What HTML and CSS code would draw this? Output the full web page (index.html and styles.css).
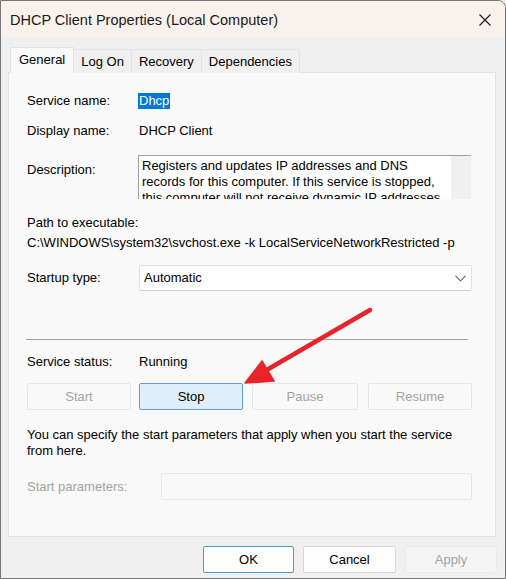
FILE: index.html
```html
<!DOCTYPE html>
<html lang="en">
<head>
<meta charset="utf-8">
<title>DHCP Client Properties (Local Computer)</title>
<link rel="stylesheet" href="styles.css">
</head>
<body>
<div class="window">
  <div class="titlebar">
    <span class="title">DHCP Client Properties (Local Computer)</span>
    <svg class="close" width="12" height="12" viewBox="0 0 12 12" aria-label="Close">
      <path d="M0.5 0.5 L11.5 11.5 M11.5 0.5 L0.5 11.5" stroke="#1b1b1b" stroke-width="1.1" fill="none"/>
    </svg>
  </div>

  <div class="tabs">
    <div class="tab active">General</div>
    <div class="tab">Log On</div>
    <div class="tab">Recovery</div>
    <div class="tab">Dependencies</div>
  </div>

  <div class="panel">
    <div class="row">
      <span class="label">Service name:</span>
      <span class="value"><span class="selected">Dhcp</span></span>
    </div>
    <div class="row gap14">
      <span class="label">Display name:</span>
      <span class="value">DHCP Client</span>
    </div>
    <div class="row desc-row">
      <span class="label desc-label">Description:</span>
      <div class="desc-box">
        <div class="desc-text">Registers and updates IP addresses and DNS records for this computer. If this service is stopped, this computer will not receive dynamic IP addresses and DNS updates.</div>
        <div class="desc-scroll"></div>
      </div>
    </div>
    <div class="path">
      <div>Path to executable:</div>
      <div>C:\WINDOWS\system32\svchost.exe -k LocalServiceNetworkRestricted -p</div>
    </div>
    <div class="row startup-row">
      <span class="label">Startup type:</span>
      <div class="combo">
        <span>Automatic</span>
        <svg width="11" height="7" viewBox="0 0 11 7">
          <path d="M0.5 0.8 L5.5 5.8 L10.5 0.8" stroke="#5f5f5f" stroke-width="1.1" fill="none"/>
        </svg>
      </div>
    </div>

    <hr class="separator">

    <div class="row gap14">
      <span class="label">Service status:</span>
      <span class="value">Running</span>
    </div>
    <div class="actions">
      <button class="btn" disabled>Start</button>
      <button class="btn focus">Stop</button>
      <button class="btn wide" disabled>Pause</button>
      <button class="btn" disabled>Resume</button>
    </div>
    <p class="hint">You can specify the start parameters that apply when you start the service from here.</p>
    <div class="params">
      <span class="label disabled-text">Start parameters:</span>
      <div class="param-input"></div>
    </div>
  </div>

  <div class="footer">
    <button class="btn dlg default">OK</button>
    <button class="btn dlg cancel">Cancel</button>
    <button class="btn dlg apply" disabled>Apply</button>
  </div>

  <svg class="arrow" width="506" height="579" viewBox="0 0 506 579">
    <line x1="370" y1="310" x2="258" y2="375" stroke="#e8232a" stroke-width="4.5" stroke-linecap="round"/>
    <polygon points="245,383 262,361 274,381" fill="#e8232a" stroke="#e8232a" stroke-width="1.5" stroke-linejoin="round"/>
  </svg>
</div>
</body>
</html>
```

FILE: styles.css
```css
* { box-sizing: border-box; }

html, body {
  margin: 0;
  padding: 0;
  background: #f0f0f0;
}

body {
  font-family: "Liberation Sans", Arial, sans-serif;
  font-size: 13px;
  color: #000;
}

.window {
  position: relative;
  width: 506px;
  height: 579px;
  border: 1px solid #757575;
  border-top-right-radius: 8px;
  background: #f0f0f0;
  display: flex;
  flex-direction: column;
  overflow: hidden;
}

/* title bar */
.titlebar {
  height: 36px;
  flex: none;
  background: #f9f1ec;
  display: flex;
  align-items: center;
  justify-content: space-between;
  padding: 0 14px 0 9px;
}

.title {
  font-size: 14.5px;
  color: #1a1a1a;
  padding-top: 1px;
}

.close { display: block; margin-top: 1px; }

/* tab strip */
.tabs {
  flex: none;
  display: flex;
  align-items: flex-end;
  height: 26px;
  margin-top: 10px;
  padding-left: 9px;
  position: relative;
  z-index: 1;
}

.tab {
  height: 24px;
  line-height: 23px;
  padding: 0 7px;
  border: 1px solid #e3e3e3;
  border-bottom: none;
  background: #f0f0f0;
  color: #000;
}

.tab + .tab { border-left: none; }

.tab.active {
  height: 26px;
  line-height: 24px;
  padding: 0 8px;
  background: #f9f9f9;
  border-color: #e3e3e3;
}

/* page */
.panel {
  flex: none;
  height: 465px;
  margin: -1px 9px 0 7px;
  background: #f9f9f9;
  border: 1px solid #e3e3e3;
  padding: 20px 22px 0 18px;
}

.row {
  display: flex;
  align-items: center;
  height: 16px;
  line-height: 16px;
}

.gap14 { margin-top: 14px; }

.label {
  width: 111px;
  flex: none;
}

.value { padding-left: 1px; }

.selected {
  display: inline-block;
  background: #0078d7;
  color: #fff;
  margin-left: -1px;
  padding: 0 1px;
}

.desc-row {
  height: 44px;
  margin-top: 16px;
  align-items: flex-start;
}

.desc-label { margin-top: 7px; }

.desc-box {
  width: 333px;
  height: 44px;
  border-top: 1px solid #a0a0a0;
  border-left: 1px solid #a0a0a0;
  background: #fff;
  display: flex;
  overflow: hidden;
}

.desc-text {
  flex: 1;
  padding: 2px 0 0 3px;
  line-height: 16px;
  font-size: 13px;
}

.desc-scroll {
  width: 20px;
  flex: none;
  background: #f0f0f0;
}

.path {
  margin-top: 14px;
  line-height: 20px;
}

.startup-row {
  height: 26px;
  margin-top: 12px;
}

.combo {
  margin-left: 1px;
  width: 333px;
  height: 26px;
  background: #fff;
  border: 1px solid #e2e2e2;
  border-bottom-color: #cfcfcf;
  border-radius: 2px;
  display: flex;
  align-items: center;
  justify-content: space-between;
  padding: 0 5px 0 4px;
}

.combo svg { display: block; margin-top: 1px; }

.separator {
  border: none;
  border-top: 1px solid #a0a0a0;
  height: 0;
  margin: 48px 5px 0 -1px;
}

.actions {
  margin-top: 13px;
  display: flex;
  height: 27px;
}

.actions .btn { width: 104px; flex: none; }
.actions .btn:nth-child(2) { margin-left: 8px; }
.actions .btn:nth-child(3) { margin-left: 9px; width: 106px; }
.actions .btn:nth-child(4) { margin-left: 10px; }

.btn {
  font-family: "Liberation Sans", Arial, sans-serif;
  font-size: 13px;
  height: 27px;
  background: #fdfdfd;
  border: 1px solid #d6d6d6;
  border-radius: 2px;
  color: #000;
  padding: 0;
}

.btn:disabled {
  background: #f9f9f9;
  border-color: #e6e6e6;
  color: #a3a3a3;
}

.btn.focus {
  background: #e0eef9;
  border-color: #5c9fd8;
}

.hint {
  margin: 17px 0 0 0;
  line-height: 16px;
}

.params {
  margin-top: 14px;
  display: flex;
  align-items: center;
  height: 27px;
}

.params .label { width: 134px; }

.disabled-text { color: #a3a3a3; }

.param-input {
  width: 311px;
  height: 27px;
  border: 1px solid #e6e6e6;
  border-radius: 2px;
  background: #f9f9f9;
}

/* dialog buttons */
.footer {
  flex: none;
  display: flex;
  justify-content: flex-end;
  gap: 9px;
  padding: 9px 8px 0 0;
}

.btn.dlg { width: 91px; flex: none; }
.btn.dlg.cancel { width: 93px; }
.btn.dlg.apply { width: 92px; }

.btn.default {
  background: #fdfdfd;
  border-color: #4e98d6;
}

.btn.dlg:disabled {
  background: #f5f5f5;
  border-color: #ebebeb;
}

/* annotation overlay */
.arrow {
  position: absolute;
  left: -1px;
  top: -1px;
  pointer-events: none;
}
```
